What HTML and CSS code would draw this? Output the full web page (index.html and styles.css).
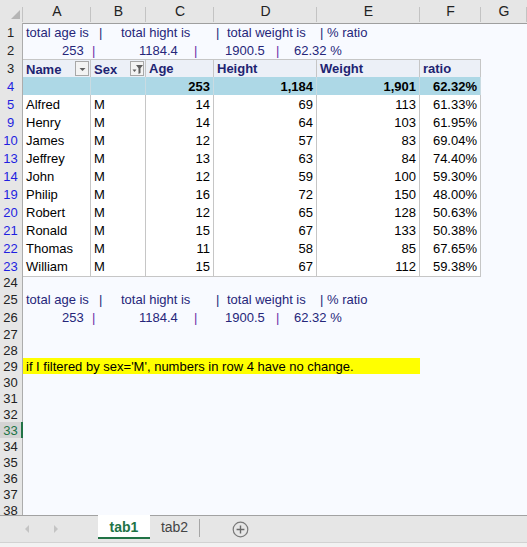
FILE: index.html
```html
<!DOCTYPE html>
<html>
<head>
<meta charset="utf-8">
<link rel="stylesheet" href="styles.css">
</head>
<body>
<div class="sheet">
  <div class="row colhead">
    <div class="ch corner"><svg width="23" height="22" viewBox="0 0 23 22"><polygon points="20,10 20,19 11,19" fill="#b5b5b5"/></svg></div>
    <div class="ch">A</div><div class="ch">B</div><div class="ch">C</div><div class="ch">D</div><div class="ch">E</div><div class="ch">F</div><div class="ch">G</div>
  </div>

  <div class="row">
    <div class="rh">1</div>
    <div class="note n1">
      <span>total age is</span><span>|</span><span>total hight is</span><span>|</span><span>total weight is</span><span>|</span><span>% ratio</span>
    </div>
  </div>
  <div class="row">
    <div class="rh">2</div>
    <div class="note n2">
      <span>253</span><span class="pipe">|</span><span>1184.4</span><span class="pipe">|</span><span>1900.5</span><span class="pipe">|</span><span>62.32 %</span>
    </div>
  </div>
  <div class="row">
    <div class="rh">3</div>
    <div class="c th"><span>Name</span><span class="fbtn"><svg width="11" height="12" viewBox="0 0 11 12"><polygon points="2.5,5 8.5,5 5.5,8" fill="#5f5f5f"/></svg></span></div>
    <div class="c th"><span>Sex</span><span class="fbtn"><svg width="11" height="12" viewBox="0 0 11 12"><polygon points="0.5,6.5 4.5,6.5 2.5,9" fill="#5f5f5f"/><polygon points="4,2 11,2 8.5,5.2 8.5,10 6.5,11 6.5,5.2" fill="#5f5f5f"/></svg></span></div>
    <div class="c th">Age</div>
    <div class="c th">Height</div>
    <div class="c th">Weight</div>
    <div class="c th">ratio</div>
  </div>
  <div class="row">
    <div class="rh f">4</div>
    <div class="c tot"></div><div class="c tot"></div>
    <div class="c tot n">253</div><div class="c tot n">1,184</div><div class="c tot n">1,901</div><div class="c tot n">62.32%</div>
  </div>
  <div class="row"><div class="rh f">5</div><div class="c">Alfred</div><div class="c">M</div><div class="c n">14</div><div class="c n">69</div><div class="c n">113</div><div class="c n">61.33%</div></div>
  <div class="row"><div class="rh f">9</div><div class="c">Henry</div><div class="c">M</div><div class="c n">14</div><div class="c n">64</div><div class="c n">103</div><div class="c n">61.95%</div></div>
  <div class="row"><div class="rh f">10</div><div class="c">James</div><div class="c">M</div><div class="c n">12</div><div class="c n">57</div><div class="c n">83</div><div class="c n">69.04%</div></div>
  <div class="row"><div class="rh f">13</div><div class="c">Jeffrey</div><div class="c">M</div><div class="c n">13</div><div class="c n">63</div><div class="c n">84</div><div class="c n">74.40%</div></div>
  <div class="row"><div class="rh f">14</div><div class="c">John</div><div class="c">M</div><div class="c n">12</div><div class="c n">59</div><div class="c n">100</div><div class="c n">59.30%</div></div>
  <div class="row"><div class="rh f">19</div><div class="c">Philip</div><div class="c">M</div><div class="c n">16</div><div class="c n">72</div><div class="c n">150</div><div class="c n">48.00%</div></div>
  <div class="row"><div class="rh f">20</div><div class="c">Robert</div><div class="c">M</div><div class="c n">12</div><div class="c n">65</div><div class="c n">128</div><div class="c n">50.63%</div></div>
  <div class="row"><div class="rh f">21</div><div class="c">Ronald</div><div class="c">M</div><div class="c n">15</div><div class="c n">67</div><div class="c n">133</div><div class="c n">50.38%</div></div>
  <div class="row"><div class="rh f">22</div><div class="c">Thomas</div><div class="c">M</div><div class="c n">11</div><div class="c n">58</div><div class="c n">85</div><div class="c n">67.65%</div></div>
  <div class="row"><div class="rh f">23</div><div class="c">William</div><div class="c">M</div><div class="c n">15</div><div class="c n">67</div><div class="c n">112</div><div class="c n">59.38%</div></div>

  <div class="row s15"><div class="rh">24</div></div>
  <div class="row">
    <div class="rh">25</div>
    <div class="note n1">
      <span>total age is</span><span>|</span><span>total hight is</span><span>|</span><span>total weight is</span><span>|</span><span>% ratio</span>
    </div>
  </div>
  <div class="row">
    <div class="rh">26</div>
    <div class="note n2">
      <span>253</span><span class="pipe">|</span><span>1184.4</span><span class="pipe">|</span><span>1900.5</span><span class="pipe">|</span><span>62.32 %</span>
    </div>
  </div>
  <div class="row s"><div class="rh">27</div></div>
  <div class="row s"><div class="rh">28</div></div>
  <div class="row s"><div class="rh">29</div><div class="hl">if I filtered by sex='M', numbers in row 4 have no change.</div></div>
  <div class="row s"><div class="rh">30</div></div>
  <div class="row s"><div class="rh">31</div></div>
  <div class="row s"><div class="rh">32</div></div>
  <div class="row s"><div class="rh act">33</div></div>
  <div class="row s"><div class="rh">34</div></div>
  <div class="row s"><div class="rh">35</div></div>
  <div class="row s"><div class="rh">36</div></div>
  <div class="row s"><div class="rh">37</div></div>
  <div class="row s"><div class="rh">38</div></div>
</div>

<div class="tabs">
  <div class="nav">
    <svg width="6" height="8" viewBox="0 0 6 8"><polygon points="5,0 5,8 1,4" fill="#c4c4c4"/></svg>
    <svg width="6" height="8" viewBox="0 0 6 8"><polygon points="1,0 1,8 5,4" fill="#c4c4c4"/></svg>
  </div>
  <div class="tab active">tab1</div>
  <div class="tab">tab2</div>
  <div class="tsep"></div>
  <div class="add"><svg width="17" height="17" viewBox="0 0 17 17"><circle cx="8.5" cy="8.5" r="7.3" fill="none" stroke="#7a7a7a" stroke-width="1.2"/><path d="M8.5 4.6V12.4M4.6 8.5H12.4" stroke="#6a6a6a" stroke-width="1.4"/></svg></div>
</div>
<div class="foot"></div>
</body>
</html>
```

FILE: styles.css
```css
* { box-sizing: border-box; }
body {
  margin: 0;
  width: 527px;
  height: 547px;
  overflow: hidden;
  background: #f8faff;
  font-family: "Liberation Sans", Arial, sans-serif;
  font-size: 13px;
  color: #000;
}
.sheet { height: 515px; overflow: hidden; }
.row {
  display: grid;
  grid-template-columns: 23px 68px 55px 68px 103px 103px 61px 1fr;
  height: 18px;
}
.row.s { height: 16px; }
.row.s15 { height: 15px; }
.colhead { height: 23px; }
.ch {
  background: linear-gradient(#c3c3c3, #c3c3c3) right 7px / 1px 15px no-repeat, #e6e6e6;
  border-bottom: 1px solid #9f9f9f;
  text-align: center;
  line-height: 23px;
  font-size: 14px;
  color: #222;
}
.ch.corner { line-height: 0; }
.ch.corner svg { display: block; }
.rh {
  background: #e6e6e6;
  border-right: 1px solid #acacac;
  border-bottom: 1px solid #c6c6c6;
  text-align: center;
  line-height: 19px;
  font-size: 13px;
  color: #222;
  padding-right: 1px;
}
.row.s .rh { line-height: 17px; }
.row.s15 .rh { line-height: 16px; }
.rh.f { color: #1f1fe0; }
.rh.act {
  background: #d3d3d3;
  color: #217346;
  border-right: 2px solid #217346;
  padding-right: 0;
}
.note {
  grid-column: 2 / -1;
  display: grid;
  line-height: 20px;
  color: #26267a;
  white-space: nowrap;
}
.note span { overflow: visible; }
.n1 {
  grid-template-columns: 73px 22px 95px 11px 93px 7px auto;
  padding-left: 3px;
}
.n2 {
  grid-template-columns: 30px 47px 55px 31px 51px 18px auto;
  padding-left: 39px;
}
.pipe { color: #6b2aa8; }
.c {
  border-right: 1px solid #c6c6c6;
  border-bottom: 1px solid #c6c6c6;
  padding: 0 3px;
  line-height: 19px;
  white-space: nowrap;
  overflow: hidden;
  background: #fff;
}
.c.n { text-align: right; }
.c.th {
  background: #ecf0f7;
  box-shadow: inset 0 1px 0 #c6c6c6;
  color: #1e2472;
  font-weight: bold;
  line-height: 18px;
  display: flex;
  justify-content: space-between;
  align-items: center;
  padding-right: 1px;
}
.c.th > span:first-child, .c.th { padding-top: 1px; }
.fbtn {
  width: 14px;
  height: 15px;
  border: 1px solid #a8a8a8;
  background: #f3f3f3;
  display: flex;
  align-items: center;
  justify-content: center;
  margin-top: -1px;
}
.fbtn svg { display: block; }
.c.tot {
  background: #add8e6;
  font-weight: bold;
  border-right-color: #c9dbe2;
  border-bottom-color: #c6c6c6;
}
.hl {
  grid-column: 2 / 7;
  background: #ffff00;
  padding-left: 3px;
  line-height: 18px;
  height: 16px;
  overflow: visible;
  white-space: nowrap;
}
.tabs {
  height: 27px;
  border-top: 1px solid #a2a2a2;
  background: #e6e6e6;
  display: flex;
  align-items: stretch;
}
.nav {
  width: 98px;
  display: flex;
  align-items: center;
  gap: 23px;
  padding-left: 24px;
}
.nav svg { display: block; }
.tab {
  width: 49px;
  text-align: center;
  line-height: 23px;
  font-size: 14px;
  color: #444;
}
.tab.active {
  width: 52px;
  background: #fff;
  color: #217346;
  font-weight: bold;
  margin-top: -1px;
  margin-bottom: 3px;
  border-bottom: 2px solid #217346;
  line-height: 24px;
}
.tsep {
  width: 1px;
  background: #a6a6a6;
  margin: 3px 0 5px;
}
.add {
  margin-left: 32px;
  display: flex;
  align-items: center;
}
.add svg { display: block; }
.foot {
  height: 5px;
  background: #f2f2f2;
  border-top: 1px solid #d2d2d2;
}
```
